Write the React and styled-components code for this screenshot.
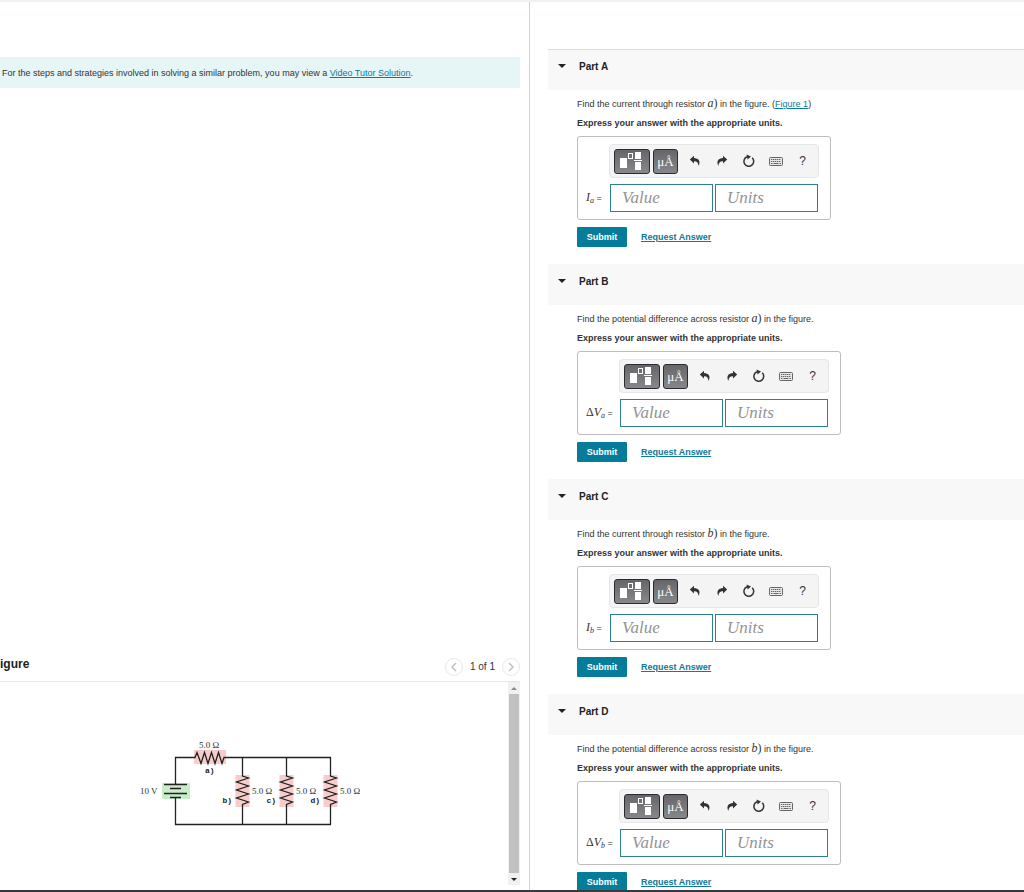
import styled, { createGlobalStyle } from "styled-components";

const GlobalStyle = createGlobalStyle`
  *, *::before, *::after {
    box-sizing: border-box;
  }

  body {
    margin: 0;
    background: #fff;
    color: #333;
    font: 9px/19px "Liberation Sans", Arial, sans-serif;
  }

  h2, p {
    margin: 0;
  }

  button, input {
    font: inherit;
    color: inherit;
  }
`;

const Page = styled.div`
  display: flex;
  flex-direction: column;
  height: 100vh;
  border-top: 2px solid #edf3f4;
  border-bottom: 2px solid #3a3a3e;
  overflow: hidden;
`;

const Columns = styled.main`
  flex: 1;
  min-height: 0;
  display: grid;
  grid-template-columns: minmax(0, 530fr) minmax(0, 494fr);
`;

const LeftColumn = styled.section`
  display: flex;
  flex-direction: column;
  min-height: 0;
  padding: 55px 9px 5px 0;
  border-right: 1px solid #c9d6da;
`;

const Hint = styled.p`
  padding: 7px 2px 5px;
  background: #e6f5f6;
`;

const Link = styled.a`
  color: #0f7a99;
  text-decoration: underline;
  font-weight: ${({ $bold }) => ($bold ? "bold" : "normal")};
`;

const Figure = styled.section`
  margin-top: auto;
`;

const FigureHead = styled.div`
  display: flex;
  align-items: center;
  justify-content: space-between;
  height: 30px;
  border-bottom: 1px solid #e6e6e6;
`;

const FigureTitle = styled.h2`
  padding-bottom: 4px;
  color: #222;
  font-size: 12px;
  line-height: 19px;
`;

const Pager = styled.div`
  display: flex;
  align-items: center;
  gap: 7px;
  font-size: 10px;
`;

const PagerButton = styled.button`
  display: grid;
  place-items: center;
  width: 18px;
  height: 18px;
  padding: 0;
  border: 1px solid #e8e8e8;
  border-radius: 50%;
  background: #fff;
`;

const FigureBody = styled.div`
  display: flex;
  height: 203px;
`;

const Canvas = styled.div`
  flex: 1;
  display: flex;
  justify-content: center;
  padding-top: 54px;
`;

const Scrollbar = styled.div`
  display: flex;
  flex-direction: column;
  width: 12px;
  background: #f1f1f1;
`;

const ScrollArrow = styled.div`
  display: grid;
  place-items: center;
  height: 12px;
`;

const ScrollThumb = styled.div`
  flex: 1;
  margin: 0 1px;
  background: #c1c1c1;
`;

const RightColumn = styled.section`
  padding: 47px 0 0 18px;
  overflow: hidden;
`;

const PartBlock = styled.article`
  height: 215px;
`;

const PartHead = styled.button`
  display: flex;
  align-items: center;
  gap: 13px;
  width: 100%;
  height: 41px;
  padding: 0 10px 8px;
  border: 0;
  border-top: 1px solid ${({ $first }) => ($first ? "#dcdcdc" : "#f8f8f8")};
  background: #f8f8f8;
  text-align: left;
`;

const PartTitle = styled.span`
  color: #222;
  font-size: 10px;
  font-weight: bold;
`;

const PartBody = styled.div`
  padding: 5px 0 0 29px;
`;

const Bold = styled.p`
  font-weight: bold;
`;

const MathText = styled.span`
  font-family: "Liberation Serif", "Times New Roman", serif;
  font-size: 12px;
  line-height: 12px;

  sub {
    font-size: 8px;
    line-height: 8px;
    vertical-align: -2px;
  }
`;

const AnswerBox = styled.div`
  display: grid;
  grid-template-columns: ${({ $wide }) => ($wide ? 33 : 23)}px 210px;
  row-gap: 6px;
  width: max-content;
  margin-top: 3px;
  padding: 7px 11px 7px 8px;
  border: 1px solid #bdbdbd;
  border-radius: 3px;
`;

const Toolbar = styled.div`
  grid-column: 2;
  display: flex;
  align-items: center;
  height: 34px;
  padding-left: 4px;
  border: 1px solid #e6e6e6;
  border-radius: 4px;
  background: #f4f4f4;
`;

const DarkTool = styled.button`
  flex: none;
  display: grid;
  place-items: center;
  width: ${({ $wide }) => ($wide ? 36 : 25)}px;
  height: 25px;
  margin-right: 3px;
  padding: 0;
  border: 1px solid #2c2c30;
  border-radius: 3px;
  background: linear-gradient(#66666a, #88888c);
  color: #fff;
  font-family: "Liberation Serif", "Times New Roman", serif;
  font-size: 13px;
`;

const Tool = styled.button`
  flex: none;
  display: grid;
  place-items: center;
  width: 27px;
  height: 25px;
  padding: 0;
  border: 0;
  background: none;
  color: #333;
  font-size: 12px;
`;

const AnswerLabel = styled.label`
  align-self: center;
  white-space: nowrap;
`;

const Fields = styled.div`
  display: grid;
  grid-template-columns: 1fr 1fr;
  gap: 2px;
  padding: 0 1px;
`;

const Field = styled.input`
  width: 100%;
  height: 28px;
  padding: 0 11px;
  border: 1px solid #2b7f98;
  border-radius: 0;
  background: #fff;
  font: italic 17px/20px "Liberation Serif", "Times New Roman", serif;

  &::placeholder {
    color: #939393;
    opacity: 1;
  }
`;

const Actions = styled.div`
  display: flex;
  align-items: center;
  gap: 14px;
  margin-top: 7px;
`;

const Submit = styled.button`
  width: 50px;
  height: 20px;
  padding: 0;
  border: 0;
  border-radius: 1px;
  background: #067c9b;
  color: #fff;
  font-weight: bold;
`;

const parts = [
  { name: "A", text: "Find the current through resistor", letter: "a", symbol: "I", figure: true },
  { name: "B", text: "Find the potential difference across resistor", letter: "a", symbol: "V", delta: true },
  { name: "C", text: "Find the current through resistor", letter: "b", symbol: "I" },
  { name: "D", text: "Find the potential difference across resistor", letter: "b", symbol: "V", delta: true },
];

function TemplateIcon() {
  return (
    <svg width="24" height="19" viewBox="0 0 24 19" fill="#fff">
      <rect x="0" y="6" width="7" height="10" />
      <rect x="8.5" y="1.5" width="4" height="5" fill="none" stroke="#fff" />
      <rect x="15" y="0" width="6" height="7" />
      <rect x="14" y="8" width="8" height="1" />
      <rect x="15" y="10" width="6" height="8" />
    </svg>
  );
}

function ArrowIcon({ flip }) {
  return (
    <svg width="12" height="12" viewBox="0 0 12 12">
      <path
        d="M5 .8.8 4.600 5 8.400V6.200c2.800 0 4.200 1.200 4.600 4.800C12 6 9.500 3.200 5 3Z"
        fill="#333"
        transform={flip ? "translate(12 0) scale(-1 1)" : undefined}
      />
    </svg>
  );
}

function ResetIcon() {
  return (
    <svg width="14" height="14" viewBox="0 0 14 14">
      <path d="M10.200 3.800A4.900 4.900 0 1 1 5 2.800" fill="none" stroke="#333" strokeWidth="1.500" />
      <path d="M4.500.6 9 2.400 5.600 5.400Z" fill="#333" />
    </svg>
  );
}

function KeyboardIcon() {
  return (
    <svg width="14" height="12" viewBox="0 0 14 12">
      <rect x="0.5" y="2.5" width="13" height="8" rx="1" fill="#e8e8e8" stroke="#666" />
      <path d="M2 4.500h10M2 6.500h10" stroke="#666" strokeDasharray="1.400 0.600" />
      <path d="M2 8.500h1.500M4.500 8.500h5M10.500 8.500H12" stroke="#666" />
    </svg>
  );
}

function Triangle({ up, size }) {
  return (
    <svg width={size} height={size / 2} viewBox="0 0 8 4">
      <path d={up ? "M0 4h8L4 0Z" : "M0 0h8L4 4Z"} fill={up ? "#8a8a8a" : "#222"} />
    </svg>
  );
}

function Chevron({ right }) {
  return (
    <svg width="8" height="10" viewBox="0 0 8 10" fill="none" stroke="#c0c0c0" strokeWidth="1.500">
      <path d={right ? "M2 1l4 4-4 4" : "M6 1L2 5l4 4"} />
    </svg>
  );
}

function Circuit() {
  const branches = [
    { x: 102.5, letter: "b)" },
    { x: 146.5, letter: "c)" },
    { x: 190.5, letter: "d)" },
  ];

  return (
    <svg width="228" height="96" viewBox="0 0 228 96" role="img" aria-label="Circuit with four resistors">
      <g fill="#f9cccc">
        <rect x="54" y="14" width="32" height="14" />
        {branches.map(({ x }) => (
          <rect key={x} x={x - 7} y="39" width="14" height="32" />
        ))}
      </g>
      <rect x="22" y="47" width="28" height="16" fill="#c9ecc9" />
      <g fill="none" stroke="#222" strokeWidth="1.300">
        <path d="M35.500 48V21.500H55l2-5 4 11 3.500-11 3.500 11 3.500-11 3.500 11 3.500-11 3.500 11 2-6H191M35.500 62v26.500H191" />
        {branches.map(({ x }) => (
          <path
            key={x}
            d={`M${x} 21v19l6 2-12 4 12 4-12 4 12 4-12 4 12 4-6 2.500V88.500`}
          />
        ))}
        <path d="M24 48.500h23M30 52.500h11M24 57.500h23M30 61.500h11" />
      </g>
      <g fill="#333" fontFamily="Liberation Serif, serif" fontSize="9">
        <text x="0" y="58">10 V</text>
        <text x="59" y="12">5.0 Ω</text>
        {branches.map(({ x }) => (
          <text key={x} x={x + 9.5} y="58">5.0 Ω</text>
        ))}
      </g>
      <g fill="#222" fontFamily="Liberation Mono, monospace" fontSize="8" fontWeight="bold">
        <text x="65" y="37">a)</text>
        {branches.map(({ x, letter }) => (
          <text key={x} x={x - 20} y="67">{letter}</text>
        ))}
      </g>
    </svg>
  );
}

function Part({ name, text, letter, symbol, delta, figure }) {
  const id = `value-${name}`;

  return (
    <PartBlock>
      <PartHead type="button" aria-expanded="true" $first={name === "A"}>
        <Triangle size={8} />
        <PartTitle>Part {name}</PartTitle>
      </PartHead>
      <PartBody>
        <p>
          {text} <MathText><i>{letter}</i>)</MathText> in the figure.
          {figure && <> (<Link href="#figure">Figure 1</Link>)</>}
        </p>
        <Bold>Express your answer with the appropriate units.</Bold>
        <AnswerBox $wide={delta}>
          <Toolbar>
            <DarkTool type="button" $wide aria-label="Templates"><TemplateIcon /></DarkTool>
            <DarkTool type="button">μÅ</DarkTool>
            <Tool type="button" aria-label="Undo"><ArrowIcon /></Tool>
            <Tool type="button" aria-label="Redo"><ArrowIcon flip /></Tool>
            <Tool type="button" aria-label="Reset"><ResetIcon /></Tool>
            <Tool type="button" aria-label="Keyboard"><KeyboardIcon /></Tool>
            <Tool type="button">?</Tool>
          </Toolbar>
          <AnswerLabel htmlFor={id}>
            <MathText>
              {delta && "Δ"}<i>{symbol}<sub>{letter}</sub></i>
            </MathText>{" "}
            =
          </AnswerLabel>
          <Fields>
            <Field id={id} placeholder="Value" />
            <Field aria-label="Units" placeholder="Units" />
          </Fields>
        </AnswerBox>
        <Actions>
          <Submit type="button">Submit</Submit>
          <Link href="#answer" $bold>Request Answer</Link>
        </Actions>
      </PartBody>
    </PartBlock>
  );
}

function App() {
  return (
    <Page>
      <GlobalStyle />
      <Columns>
        <LeftColumn>
          <Hint>
            For the steps and strategies involved in solving a similar problem, you may view a{" "}
            <Link href="#video">Video Tutor Solution</Link>.
          </Hint>
          <Figure id="figure">
            <FigureHead>
              <FigureTitle>igure</FigureTitle>
              <Pager>
                <PagerButton type="button" aria-label="Previous"><Chevron /></PagerButton>
                <span>1 of 1</span>
                <PagerButton type="button" aria-label="Next"><Chevron right /></PagerButton>
              </Pager>
            </FigureHead>
            <FigureBody>
              <Canvas>
                <Circuit />
              </Canvas>
              <Scrollbar>
                <ScrollArrow><Triangle size={6} up /></ScrollArrow>
                <ScrollThumb />
                <ScrollArrow><Triangle size={6} /></ScrollArrow>
              </Scrollbar>
            </FigureBody>
          </Figure>
        </LeftColumn>
        <RightColumn>
          {parts.map((part) => (
            <Part key={part.name} {...part} />
          ))}
        </RightColumn>
      </Columns>
    </Page>
  );
}

export default App;
